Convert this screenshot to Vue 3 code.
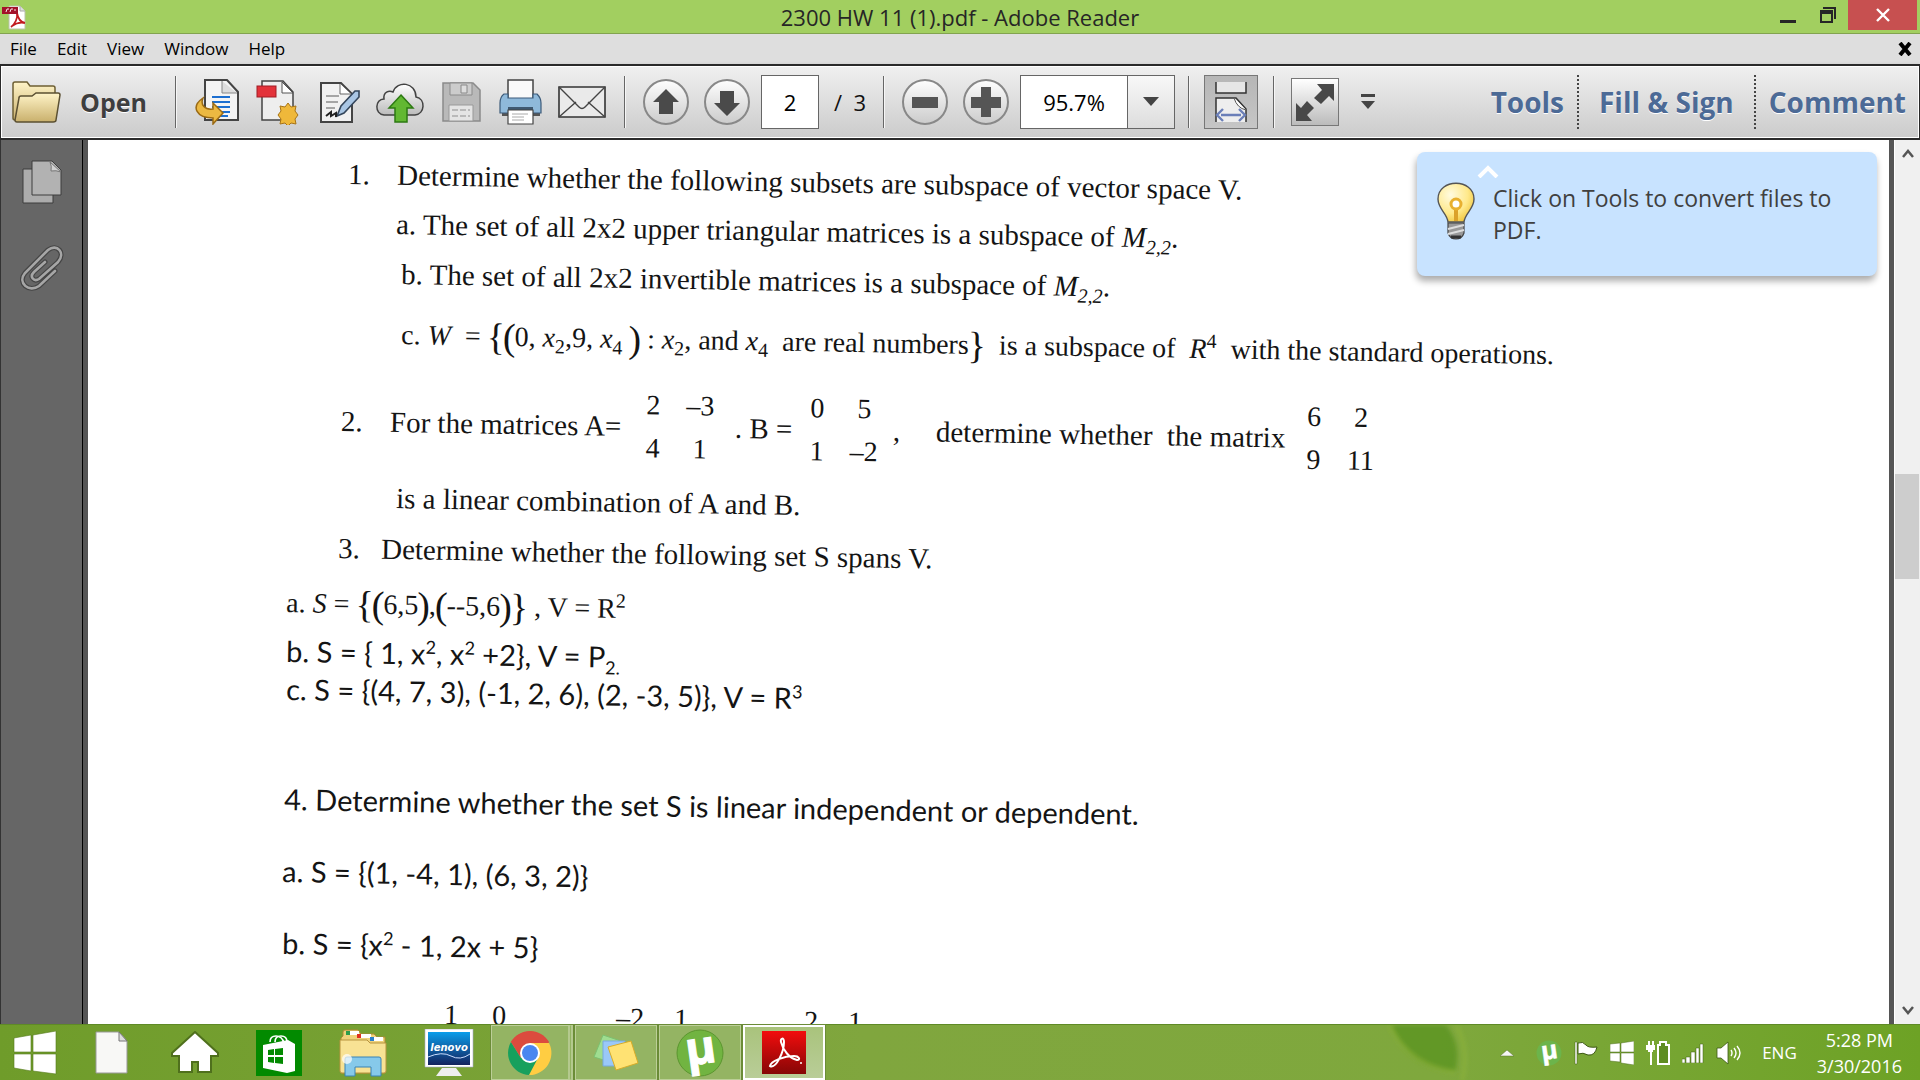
<script setup>
import { ref } from 'vue'

const menus = ['File', 'Edit', 'View', 'Window', 'Help']
const page = ref('2')
const zoom = ref('95.7%')
const matrixA = ['2', '–3', '4', '1']
const matrixB = ['0', '5', '1', '–2']
const matrixC = ['6', '2', '9', '11']
</script>

<template>
  <div class="desktop">
    <header class="titlebar">
      <svg class="app-icon" width="24" height="28" viewBox="0 0 24 28">
        <path d="M7 4h11l5 5v18H7z" fill="#fff" stroke="#b9c2a8" />
        <path d="M18 4v5h5" fill="#ddd" stroke="#aaa" />
        <path d="M9 25c4-3 7-9 6-14 1 6 3 9 8 10-5-1-9 0-13 3" fill="none" stroke="#c21a1f" stroke-width="1.8" />
        <rect x="0" y="5" width="16" height="7" fill="#a3122a" />
        <path d="M4 10l1-3h2M8 10l1-3h2M12 8h2" stroke="#fff" fill="none" stroke-width=".9" />
      </svg>
      <h1>2300 HW 11 (1).pdf - Adobe Reader</h1>
      <div class="window-buttons">
        <button aria-label="Minimize"><svg width="18" height="18"><path d="M1 14h16v3H1z" fill="#262626" /></svg></button>
        <button aria-label="Restore"><svg width="18" height="18"><path d="M4 1h13v12h-2V3H4z" fill="#262626" /><path d="M1 4h13v13H1zM3 8v7h9V8z" fill="#262626" fill-rule="evenodd" /></svg></button>
        <button class="close" aria-label="Close"><svg width="14" height="14" viewBox="0 0 14 14"><path d="M1 1l12 12M13 1L1 13" stroke="#fff" stroke-width="2.4" /></svg></button>
      </div>
    </header>

    <nav class="menubar">
      <button v-for="m in menus" :key="m">{{ m }}</button>
      <button class="doc-close" aria-label="Close document"><svg width="14" height="14" viewBox="0 0 14 14"><path d="M2 1l10 12M12 1L2 13" stroke="#000" stroke-width="4" /></svg></button>
    </nav>

    <div class="toolbar">
      <button class="open">
        <svg width="50" height="42" viewBox="0 0 50 42">
          <defs><linearGradient id="fold" x2="0" y2="1"><stop stop-color="#fff4c8" /><stop offset="1" stop-color="#c9b06c" /></linearGradient></defs>
          <path d="M1 3q0-2 2-2h12l3 4h23q2 0 2 2v32H3q-2 0-2-2z" fill="url(#fold)" stroke="#6d5f33" stroke-width="1.5" />
          <path d="M7 17q0-2 2-2h11l4-3h22q2 0 2 2l-4 25q0 2-3 2H5q-2 0-2-2z" fill="url(#fold)" stroke="#5b5032" stroke-width="1.5" />
        </svg>
        <span>Open</span>
      </button>
      <i class="sep"></i>
      <div class="tools">
        <button aria-label="Convert">
          <svg width="46" height="46" viewBox="0 0 46 46">
            <path d="M11 1h22l11 12v28H11z" fill="#f4f4f4" stroke="#444" stroke-width="2" />
            <path d="M28 2v12h15" fill="#ddd" stroke="#888" />
            <path d="M18 18h18M18 23h18M18 28h18M22 33h14M26 37h8" stroke="#1d6fd0" stroke-width="2" />
            <path d="M9 19C-4 28 3 39 19 39v6l10-11-10-10v6C11 31 6 26 9 19z" fill="#ecb942" stroke="#9a6a14" stroke-width="1.5" />
          </svg>
        </button>
        <button aria-label="Create PDF">
          <svg width="44" height="46" viewBox="1 0 44 46">
            <path d="M7 2h21l10 11v28H7z" fill="#eee" stroke="#444" stroke-width="1.5" />
            <path d="M27 3v11h11z" fill="#fff" stroke="#555" />
            <rect x="2" y="7" width="19" height="11" fill="#e3323a" stroke="#a01c24" />
            <path d="M33 24l3 4 5-1-1 5 3 4-3 4 1 5-5-1-3 3-3-3-5 1 1-5-3-4 3-4-1-5 5 1z" fill="#efb83a" stroke="#a87416" />
          </svg>
        </button>
        <button aria-label="Sign document">
          <svg width="44" height="46" viewBox="-3 0 44 46">
            <path d="M2 4h20l11 11v28H2z" fill="#f1f1f1" stroke="#444" stroke-width="2" />
            <path d="M21 5v10h11" fill="#fff" stroke="#666" />
            <path d="M7 17h13M7 23h12M7 29h9" stroke="#a5a5a5" stroke-width="2" />
            <path d="M18 37l4-10 14-15h4v6l-15 16z" fill="#a9c6e4" stroke="#35475c" stroke-width="1.6" />
            <path d="M7 37l5-4v4l5-3v4" stroke="#222" fill="none" stroke-width="2" />
          </svg>
        </button>
        <button aria-label="Upload">
          <svg width="50" height="46" viewBox="1 0 50 46">
            <defs><linearGradient id="cl" x2="0" y2="1"><stop stop-color="#fff" /><stop offset="1" stop-color="#bbb" /></linearGradient></defs>
            <path d="M9 36C-1 35 0 20 9 20c-1-7 5-9 9-7C22 1 41 3 41 18c10 2 9 17-1 18z" fill="url(#cl)" stroke="#444" stroke-width="1.5" />
            <path d="M26 16L38 29h-6v14H20V29h-6z" fill="#62b832" stroke="#2c7a12" stroke-width="1.5" />
          </svg>
        </button>
        <button aria-label="Save">
          <svg width="40" height="46" viewBox="1 0 40 46">
            <path d="M2 4h30l7 7v31H2z" fill="#b9b9b9" stroke="#8b8b8b" stroke-width="1.5" />
            <path d="M9 4h22v12H9z" fill="#ccc" stroke="#8b8b8b" /><path d="M20 6h6v8h-6z" fill="#ddd" stroke="#888" />
            <path d="M8 26h24v16H8z" fill="#e4e4e4" stroke="#999" /><path d="M11 31h18M11 37h18" stroke="#aaa" stroke-width="1.5" stroke-dasharray="6 2" />
          </svg>
        </button>
        <button aria-label="Print">
          <svg width="44" height="46" viewBox="-1 0 44 46">
            <path d="M9 1h25v20H9z" fill="#fafafa" stroke="#444" stroke-width="1.5" />
            <path d="M3 32h38v5H3z" fill="#555" />
            <path d="M5 15h4v4h25v-4h4q4 4 4 9v10H1V24q0-6 4-9z" fill="#8fb9da" stroke="#3c5b7a" stroke-width="1.2" />
            <path d="M9 28h25v3H9z" fill="#3f5870" />
            <path d="M9 31h25v14H9z" fill="#fff" stroke="#444" stroke-width="1.2" /><path d="M13 35h16M13 38h12M13 41h12" stroke="#aaa" stroke-width="1" />
          </svg>
        </button>
        <button aria-label="Email">
          <svg width="48" height="32" viewBox="0 0 48 32">
            <path d="M1 1h46v30H1z" fill="#eaeaea" stroke="#333" stroke-width="1.6" />
            <path d="M1 31l17-15M47 31L30 16M1 1l20 20q3 3 6 0L47 1" fill="none" stroke="#444" stroke-width="1.4" />
          </svg>
        </button>
      </div>
      <i class="sep"></i>
      <div class="group">
        <button class="round" aria-label="Previous page"><svg width="30" height="30"><path d="M15 2l13 13h-6v12H8V15H2z" fill="#4a4a4a" /></svg></button>
        <button class="round" aria-label="Next page"><svg width="30" height="30"><path d="M15 29l13-13h-6V4H8v12H2z" fill="#4a4a4a" /></svg></button>
        <input v-model="page" class="page-no" aria-label="Page number" />
        <span class="count">/&nbsp; 3</span>
      </div>
      <i class="sep"></i>
      <div class="group">
        <button class="round" aria-label="Zoom out"><svg width="30" height="30"><path d="M2 10h26v11H2z" fill="#555" /></svg></button>
        <button class="round" aria-label="Zoom in"><svg width="30" height="30"><path d="M10 0h10v10h10v11H20v9H10v-9H0V10h10z" fill="#555" /></svg></button>
        <div class="combo">
          <input v-model="zoom" aria-label="Zoom level" />
          <button aria-label="Zoom presets"><svg width="18" height="10"><path d="M1 0h16L9 9z" fill="#444" /></svg></button>
        </div>
      </div>
      <i class="sep"></i>
      <button class="fit" aria-label="Fit width">
        <svg width="34" height="42" viewBox="0 0 34 42">
          <path d="M2 1v11h30V1" fill="#e6e6e6" stroke="#333" stroke-width="1.5" />
          <path d="M2 41V17h20l10 11v13" fill="#eee" stroke="#333" stroke-width="1.5" /><path d="M20 17q3 10 12 12" fill="#fff" stroke="#555" />
          <path d="M7 34h20M9 28l-6 6 6 6M25 28l6 6-6 6" stroke="#6b7fb8" stroke-width="2.4" fill="none" />
        </svg>
      </button>
      <i class="sep"></i>
      <button class="expand" aria-label="Read mode">
        <svg width="40" height="42" viewBox="0 0 40 42"><path d="M22 3h17v17l-5-5-8 8-7-6 8-8zM1 40V22l5 5 6-7 7 7-7 7 5 6z" fill="#484848" /></svg>
      </button>
      <button class="more" aria-label="More tools"><svg width="18" height="18"><path d="M2 1h14v3H2zM2 8h14l-7 8z" fill="#444" /></svg></button>
      <div class="panes">
        <a href="#tools">Tools</a>
        <a href="#sign" class="wide">Fill &amp; Sign</a>
        <a href="#comment">Comment</a>
      </div>
    </div>

    <main class="workspace">
      <aside class="sidebar">
        <button aria-label="Page thumbnails">
          <svg width="40" height="46" viewBox="-1 0 40 46">
            <path d="M0 10h30v34H0z" fill="#acacac" stroke="#3c3c3c" /><path d="M9 2h20l9 9v25H9z" fill="#b2b2b2" stroke="#3c3c3c" /><path d="M27 3q2 4 1 9 5-1 10 1z" fill="#d2d2d2" stroke="#777" />
          </svg>
        </button>
        <button aria-label="Attachments">
          <svg width="44" height="46" viewBox="0 0 44 46" fill="none" stroke-linecap="round">
            <path stroke="#454545" stroke-width="5" d="M35 26L19 41C9 48-3 38 5 28L28 5C37-2 46 8 38 17L19 34C14 37 9 32 14 27L25 17" />
            <path stroke="#a6a6a6" stroke-width="2.6" d="M35 26L19 41C9 48-3 38 5 28L28 5C37-2 46 8 38 17L19 34C14 37 9 32 14 27L25 17" />
          </svg>
        </button>
      </aside>

      <article class="page">
        <div class="line first"><span class="num">1.</span>Determine whether the following subsets are subspace of vector space V.</div>
        <div class="line sub">a. The set of all 2x2 upper triangular matrices is a subspace of <i>M<sub>2,2</sub></i>.</div>
        <div class="line sub-in">b. The set of all 2x2 invertible matrices is a subspace of <i>M<sub>2,2</sub></i>.</div>
        <div class="line sub-in math formula">c. <i>W</i>&nbsp; = <b>{</b><b>(</b>0, <i>x</i><sub>2</sub>,9, <i>x</i><sub>4</sub> <b>)</b> : <i>x</i><sub>2</sub>, and <i>x</i><sub>4</sub>&nbsp; are real numbers<b>}</b>&nbsp; is a subspace of &nbsp;<i>R</i><sup>4</sup>&nbsp; with the standard operations.</div>
        <div class="line matrices">
          <span class="num">2.</span><span class="lead">For the matrices A=</span>
          <span class="matrix"><span v-for="(n, i) in matrixA" :key="i">{{ n }}</span></span>
          <span class="eq">. B =</span>
          <span class="matrix"><span v-for="(n, i) in matrixB" :key="i">{{ n }}</span></span>
          <span class="comma">,</span>
          <span class="ask">determine whether&nbsp; the matrix</span>
          <span class="matrix"><span v-for="(n, i) in matrixC" :key="i">{{ n }}</span></span>
        </div>
        <div class="line sub after">is a linear combination of A and B.</div>
        <div class="line q3"><span class="num">3.</span>Determine whether the following set S spans V.</div>
        <div class="line left math set">a. <i>S</i> = <b>{</b><b>(</b>6,5<b>)</b>,<b>(</b>--5,6<b>)</b><b>}</b> , V = R<sup>2</sup></div>
        <div class="line left sans poly">b. S = { 1, x<sup>2</sup>, x<sup>2</sup> +2}, V = P<sub>2.</sub></div>
        <div class="line left sans tight">c. S = {(4, 7, 3), (-1, 2, 6), (2, -3, 5)}, V = R<sup>3</sup></div>
        <div class="line left sans q4">4. Determine whether the set S is linear independent or dependent.</div>
        <div class="line sans part">a. S = {(1, -4, 1), (6, 3, 2)}</div>
        <div class="line sans part">b. S = {x<sup>2</sup> - 1, 2x + 5}</div>
        <div class="line next"><span>1</span><span>0</span><span>–2</span><span>1</span><span>2</span><span>1</span></div>
      </article>

      <div class="scrollbar">
        <button aria-label="Scroll up"><svg width="12" height="10"><path d="M1 8l5-6 5 6" fill="none" stroke="#555" stroke-width="2.5" /></svg></button>
        <div class="thumb"></div>
        <button aria-label="Scroll down"><svg width="12" height="10"><path d="M1 2l5 6 5-6" fill="none" stroke="#555" stroke-width="2.5" /></svg></button>
      </div>

      <div class="tip">
        <svg class="tip-caret" width="22" height="13"><path d="M2 12l9-9 9 9" fill="none" stroke="#fff" stroke-width="4" /></svg>
        <svg width="38" height="58" viewBox="0 0 38 58">
          <defs><radialGradient id="bulb" cx=".35" cy=".3" r=".8"><stop stop-color="#fffbe0" /><stop offset=".6" stop-color="#ffe98a" /><stop offset="1" stop-color="#edc033" /></radialGradient></defs>
          <path d="M11 40C10 31 1 27 1 17 1-4 37-4 37 17c0 10-9 14-10 23z" fill="url(#bulb)" stroke="#555" stroke-width="1.4" />
          <path d="M19 39V26" stroke="#dba12a" stroke-width="4" /><circle cx="19" cy="22" r="5" fill="#fff" stroke="#e8b030" stroke-width="3" />
          <path d="M11 41h16v10q-2 6-8 6t-8-6z" fill="#999" stroke="#444" stroke-width="1.2" /><path d="M11 47l16-4M11 52l16-4" stroke="#ddd" stroke-width="2" /><path d="M14 55h10" stroke="#333" stroke-width="3" />
        </svg>
        <p>Click on Tools to convert files to PDF.</p>
      </div>
    </main>

    <footer class="taskbar">
      <div class="pins">
        <button aria-label="Start"><svg width="44" height="44" viewBox="0 0 44 44"><path d="M1 7l17-3v17H1zM20 4l23-4v21H20zM1 23h17v17L1 37zM20 23h23v20l-23-3z" fill="#fff" stroke="#557a1c" stroke-width=".6" /></svg></button>
        <button aria-label="Document"><svg width="40" height="44" viewBox="-1 0 40 44"><path d="M1 1h23l8 9v32H1z" fill="#f8f8f6" stroke="#999" /><path d="M24 1v9h8z" fill="#ddd" stroke="#777" /></svg></button>
        <button aria-label="Home"><svg width="48" height="44" viewBox="0 0 48 44"><path d="M24 1l23 21v3h-7v16H27V31h-6v10H8V25H1v-3z" fill="#fff" stroke="#4f701d" stroke-width="2" /></svg></button>
        <button aria-label="Store"><svg width="46" height="46" viewBox="0 0 46 46"><path d="M0 0h46v46H0z" fill="#028a00" /><path d="M14 12q0-6 6-6t8 7M19 12q0-6 6-6t6 6" fill="none" stroke="#fff" stroke-width="1.6" /><path d="M7 15l25-5 7 4v27l-8 2-24-5z" fill="#fff" /><path d="M12 20l6-1v6h-6zM19 19l8-1v7h-8zM12 27h6v6l-6-1zM19 27h8v7l-8-1z" fill="#028a00" /></svg></button>
        <button aria-label="File Explorer">
          <svg width="48" height="48" viewBox="0 0 48 48">
            <path d="M4 7V3q0-2 2-2h13l3 4h13l3 3h8v36H2V9z" fill="#efd27b" stroke="#ad8a35" />
            <path d="M7 2h13v4H7z" fill="#fff" /><path d="M7 2h4v4H7z" fill="#2d9c4b" /><path d="M18 5h14v4H18z" fill="#fff" /><path d="M18 5h4v4h-4z" fill="#e03020" /><path d="M31 8h13v4H31z" fill="#fff" /><path d="M31 8h4v4h-4z" fill="#2a80c8" />
            <path d="M1 11h27l3 3h16v28q0 2-2 2H3q-2 0-2-2z" fill="#f8e294" stroke="#b7943f" />
            <path d="M6 47V30q0-2 2-2h32q2 0 2 2v17H32V38H16v9z" fill="#86c9ea" stroke="#3982b5" /><circle cx="8" cy="30" r="5" fill="#fff" opacity=".7" />
          </svg>
        </button>
        <button aria-label="Computer">
          <svg width="50" height="48" viewBox="0 0 50 48">
            <defs><linearGradient id="scr" x2="0" y2="1"><stop stop-color="#0a9eeb" /><stop offset="1" stop-color="#14225e" /></linearGradient></defs>
            <path d="M1 0h48v38H1z" fill="#fff" stroke="#aac" stroke-width=".6" /><path d="M4 3h42v33H4z" fill="url(#scr)" /><path d="M4 28q14-6 23-1t19-2" stroke="#cdf" fill="none" />
            <text x="25" y="22" class="brand">lenovo</text><path d="M18 39h14l6 8H12z" fill="#eee" />
          </svg>
        </button>
      </div>
      <div class="tasks">
        <button class="task stacked" aria-label="Chrome">
          <svg width="44" height="44" viewBox="0 0 44 44">
            <path d="M22 22L3 11A22 22 0 0 1 41 11z" fill="#dc4b3e" /><path d="M22 22V12h19A22 22 0 0 1 21 44z" fill="#ffcd42" /><path d="M22 22l8 5-9 17A22 22 0 0 1 3 11l10 16z" fill="#17a05d" /><path d="M22 12h19A22 22 0 0 0 3 11l10 16z" fill="#dc4b3e" /><circle cx="22" cy="22" r="10" fill="#fff" /><circle cx="22" cy="22" r="8" fill="#4a86f0" />
          </svg>
        </button>
        <button class="task" aria-label="Sticky Notes">
          <svg width="46" height="38" viewBox="0 0 46 38"><path d="M10 1l18 6-8 22-19-6z" fill="#9fdd90" stroke="#7cc070" /><path d="M10 7h22v25H10z" fill="#9ac8f8" stroke="#76a9dd" /><path d="M15 13l23-6 7 22-22 7z" fill="#ffe273" stroke="#d8ac28" /></svg>
        </button>
        <button class="task" aria-label="uTorrent">
          <svg width="48" height="48" viewBox="0 0 48 48"><circle cx="24" cy="24" r="23" fill="#71b441" stroke="#5b962f" /><text x="25" y="35" class="mu" transform="rotate(-8 24 24)">µ</text></svg>
        </button>
        <button class="task active" aria-label="Adobe Reader">
          <svg width="44" height="44" viewBox="0 0 44 44">
            <defs><linearGradient id="ado" x2="0" y2="1"><stop stop-color="#f20d0d" /><stop offset="1" stop-color="#860606" /></linearGradient></defs>
            <path d="M0 0h44v43H0z" fill="url(#ado)" /><path d="M8 35c6 3 14-14 14-24 0-5-4-4-3 0 2 8 8 16 16 18 4 0 2-4-3-4-10 0-23 5-24 10z" fill="none" stroke="#fff" stroke-width="2" /><circle cx="39" cy="32" r="1" fill="#fff" />
          </svg>
        </button>
      </div>
      <svg class="leaf" width="140" height="56" viewBox="0 0 140 56">
        <defs><filter id="soft"><feGaussianBlur stdDeviation="2" /></filter></defs>
        <g filter="url(#soft)"><path d="M10 0Q28 44 75 47 82 20 66 0z" fill="#5b9422" opacity=".8" /><path d="M76 0q14 24 6 56M10 0q18 40 65 47" fill="none" stroke="#94b83a" stroke-width="3" opacity=".6" /></g>
      </svg>
      <div class="tray">
        <svg width="14" height="8"><path d="M0 7l7-6 7 6z" fill="#f5f5f5" stroke="#58702c" stroke-width=".5" /></svg>
        <svg class="ut" width="26" height="26" viewBox="0 0 48 48"><circle cx="24" cy="24" r="23" fill="#6cb44b" /><text x="25" y="35" class="mu" transform="rotate(-8 24 24)">µ</text></svg>
        <svg width="24" height="24" viewBox="0 0 24 24"><path d="M1 1h2v22H1z" fill="#fff" stroke="#3d5914" stroke-width=".5" /><path d="M4 2q5-2 8 2 2 3 11 2-2 9-9 8-5-3-10-1z" fill="#fff" stroke="#3d5914" /></svg>
        <svg width="24" height="24" viewBox="0 0 24 24"><path d="M0 3l10-1v9H0zM11 2l13-2v11H11zM0 12h10v9L0 20zM11 12h13v12l-13-2z" fill="#fff" stroke="#4d6e1c" stroke-width=".5" /></svg>
        <svg width="24" height="24" viewBox="0 0 24 24"><path d="M3 0v4M7 0v4M5 10v14" stroke="#fff" stroke-width="2" /><path d="M0 4h9v5H7v2H2V9H0z" fill="#fff" /><path d="M12 4h2V1h6v3h3v19H12z" stroke="#fff" stroke-width="2" fill="#5f8d22" /></svg>
        <svg width="22" height="20" viewBox="0 0 22 20"><path d="M0 16h3v4H0zM4 14h4v6H4zM9 9h4v11H9zM14 5h3v15h-3zM18 1h3v19h-3z" fill="#fff" stroke="#3d5914" stroke-width=".5" /></svg>
        <svg width="26" height="24" viewBox="0 0 26 24"><path d="M1 7h4l7-6v22l-7-6H1z" fill="#fff" stroke="#3d5914" stroke-width=".8" /><path d="M15 9q2 3 0 6M18 7q4 5 0 10M21 5q6 7 0 14" fill="none" stroke="#fff" stroke-width="1.4" /></svg>
        <span class="lang">ENG</span>
        <time class="clock">5:28 PM<br />3/30/2016</time>
      </div>
    </footer>
  </div>
</template>

<style>
body { margin: 0; overflow: hidden; }
</style>

<style scoped>
.desktop { display: flex; flex-direction: column; height: 100vh; overflow: hidden; font-family: "Open Sans", "Noto Sans", sans-serif; color: #111; }
button { border: 0; padding: 0; margin: 0; background: none; font: inherit; color: inherit; display: flex; align-items: center; justify-content: center; }
svg { display: block; flex: none; }
input { font: inherit; color: #000; box-sizing: border-box; border: 0; padding: 0; margin: 0; text-align: center; }

.titlebar { flex: none; height: 33px; display: grid; grid-template-columns: 1fr auto 1fr; background: #a2cf60; border-bottom: 1px solid #82a34f; }
.app-icon { margin: 2px; }
.titlebar h1 { margin: 0; font-size: 22px; font-weight: 400; line-height: 34px; color: #262626; }
.window-buttons { display: flex; justify-content: flex-end; align-items: flex-start; padding-right: 3px; }
.window-buttons button { width: 40px; height: 30px; }
.window-buttons .close { width: 69px; background: #c75050; }

.menubar { flex: none; height: 30px; display: flex; align-items: center; gap: 20px; padding: 0 8px 0 10px; background: #dedede; font-size: 17px; line-height: 30px; color: #000; }
.doc-close { margin-left: auto; }

.toolbar { flex: none; box-sizing: border-box; height: 76px; display: flex; align-items: center; border: 1px solid #2a2a2a; border-width: 2px 1px; background: linear-gradient(#f0f0f0, #cbcbcb); box-shadow: inset 0 0 0 1px #fff, 0 2px 4px #0004; position: relative; }
.open { gap: 18px; box-sizing: border-box; width: 174px; padding-left: 11px; justify-content: flex-start; font-size: 25px; font-weight: 700; color: #3e3e3e; text-shadow: 0 1px #fff; }
.sep { width: 1px; height: 52px; background: #666; box-shadow: 1px 0 #f6f6f6; flex: none; }
.tools { display: flex; align-items: center; justify-content: space-between; width: 412px; margin: 0 18px; }
.group { display: flex; align-items: center; gap: 15px; padding: 0 13px 0 18px; }
.round { box-sizing: border-box; width: 46px; height: 46px; border: 2px solid #888; border-radius: 50%; background: linear-gradient(#fdfdfd, #ccc); }
.page-no { width: 58px; height: 54px; border: 1px solid #666; background: #fff; font-size: 22px; margin-left: -4px; }
.count { font-size: 22px; width: 36px; white-space: nowrap; color: #111; line-height: 30px; }
.combo { display: flex; box-sizing: border-box; width: 155px; height: 54px; border: 1px solid #666; margin-left: -4px; }
.combo input { width: 106px; background: #fff; font-size: 22px; }
.combo button { flex: 1; border-left: 1px solid #666; background: linear-gradient(#f8f8f8, #ddd); }
.fit { box-sizing: border-box; width: 54px; height: 54px; margin: 0 15px; border: 1px solid #777; background: linear-gradient(#b6b6b6, #c6c6c6); }
.expand { box-sizing: border-box; width: 48px; height: 48px; margin-left: 17px; border: 1px solid #777; background: linear-gradient(#fff, #bbb); }
.more { margin-left: 20px; }
.panes { margin-left: auto; display: flex; height: 54px; }
.panes a { padding: 0 13px; line-height: 54px; font-size: 28px; font-weight: 700; color: #4c6a96; text-decoration: none; text-shadow: 0 1px #fff; }
.panes .wide { padding: 0 20px; }
.panes a + a { border-left: 2px dotted #444; }

.workspace { flex: 1; min-height: 0; display: flex; position: relative; background: #555; }
.sidebar { flex: none; width: 81px; border-left: 1px solid #333; border-right: 1px solid #000; background: #666; display: flex; flex-direction: column; align-items: center; gap: 40px; padding-top: 19px; margin-right: 5px; }
.page { flex: 1; min-width: 0; overflow: hidden; background: #fff; color: #141414; font: 29px/36px "Liberation Serif", serif; }
.line { height: 36px; margin-top: 14px; white-space: nowrap; transform: rotate(1deg); transform-origin: 0 28px; }
.line b { font-weight: 400; font-size: 38px; line-height: 0; vertical-align: -4px; margin: 0 -1px; }
.line sub, .line sup { font-size: 20px; line-height: 0; }
.num { display: inline-block; width: 49px; flex: none; }
.line.first { margin: 16px 0 0 260px; }
.sub { margin-left: 308px; }
.sub-in { margin-left: 313px; }
.math { font-size: 28px; }
.formula { margin-top: 25px; }
.matrices { display: flex; align-items: center; height: 86px; margin: 25px 0 0 253px; transform-origin: 0 50%; }
.matrix { display: grid; grid-template-columns: 16px 30px; column-gap: 24px; line-height: 43px; font-size: 28px; }
.matrix span { display: flex; justify-content: center; }
.lead { width: 255px; }
.eq { width: 74px; padding-left: 20px; }
.comma { width: 43px; padding-left: 14px; }
.ask { width: 370px; }
.after { margin-top: 16px; }
.q3 { margin-left: 250px; }
.q3 .num { width: 43px; }
.left { margin-left: 198px; margin-top: 16px; }
.sans { font-family: Lato, sans-serif; font-size: 29px; }
.line.sans sup, .line.sans sub { font-size: 18px; }
.set { margin-top: 19px; }
.poly { margin-top: 12px; }
.tight { margin-top: 2px; }
.q4 { margin: 74px 0 0 196px; }
.part { margin: 36px 0 0 194px; }
.next { display: grid; grid-template-columns: 48px 124px 58px 130px 44px 20px; margin: 36px 0 0 356px; font-size: 28px; }

.scrollbar { flex: none; width: 26px; box-sizing: border-box; border-left: 1px solid #fff; margin-left: 5px; background: #f0f0f0; display: flex; flex-direction: column; align-items: center; }
.scrollbar button { width: 25px; height: 28px; }
.thumb { width: 24px; height: 105px; margin: 306px 1px auto 0; background: #cdcdcd; }

.tip { position: absolute; top: 12px; right: 43px; box-sizing: border-box; width: 460px; height: 124px; padding: 30px 24px 0 20px; display: flex; gap: 18px; background: #c8e3ff; border-radius: 8px; box-shadow: -1px 5px 7px #0005; }
.tip p { margin: 0; font-size: 23px; line-height: 32px; color: #404040; }
.tip-caret { position: absolute; top: 13px; left: 60px; }

.taskbar { flex: none; box-sizing: border-box; height: 56px; display: flex; align-items: stretch; position: relative; border-top: 1px solid #5f8a26; background: linear-gradient(90deg, #6f9c2a, #80a63e 45%, #7fa83d 75%, #6da225); }
.pins { display: flex; align-items: center; justify-content: space-between; width: 461px; margin: 0 17px 0 13px; }
.tasks { display: flex; gap: 2px; }
.task { box-sizing: border-box; width: 82px; border: 1px solid #bccf98; background: #94b463; box-shadow: 0 0 0 1px #6b8c37; }
.stacked { border-right: 5px double #b4c98e; }
.active { border: 2px solid #fff; background: linear-gradient(#a9c37c, #b9cd98); }
.leaf { position: absolute; right: 400px; top: 0; }
.tray { margin-left: auto; display: flex; align-items: center; gap: 12px; padding-right: 18px; color: #fff; position: relative; }
.ut { margin-left: 10px; }
.lang { font-size: 17px; margin: 0 8px; }
.clock { font-size: 18px; line-height: 26px; text-align: center; }
.brand { font: oblique 700 10px "DejaVu Sans", sans-serif; fill: #fff; text-anchor: middle; }
.mu { font: 700 46px "Open Sans", sans-serif; fill: #fff; stroke: #fff; text-anchor: middle; }
</style>
